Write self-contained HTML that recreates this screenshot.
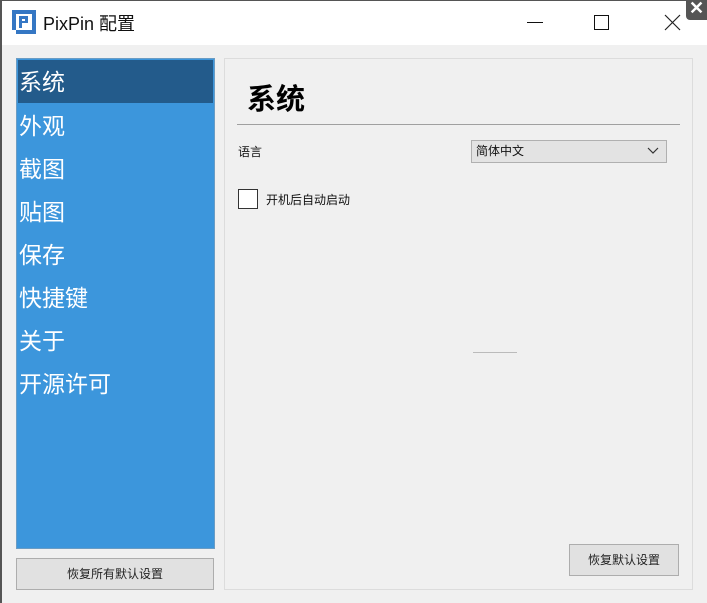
<!DOCTYPE html>
<html><head><meta charset="utf-8"><style>
*{margin:0;padding:0;box-sizing:border-box}
body{width:707px;height:603px;background:#f0f0f0;position:relative;overflow:hidden;font-family:"Liberation Sans","Noto Sans CJK SC",sans-serif}
.abs{position:absolute}
.title{left:0;top:0;width:707px;height:45px;background:#fff}
.nav{left:16px;top:58px;width:199px;height:491px;background:#3c96dc;border:1px solid #6a9cc4}
.item{position:absolute;left:2px;width:190px;height:43px;color:#fff;font-size:23px;line-height:43px}
.sel{left:1px;width:195px;background:#235b8b;padding-left:1px;top:1px}
.btn{background:#e1e1e1;border:1px solid #adadad;font-size:12px;color:#222;text-align:center}
</style></head><body>
<div class="abs title"></div>
<div class="abs" style="left:0;top:0;width:2px;height:603px;background:#555"></div>
<div class="abs" style="left:0;top:0;width:707px;height:1px;background:#555"></div>
<svg class="abs" style="left:12px;top:10px" width="24" height="24" viewBox="0 0 24 24"><rect x="0" y="0" width="24" height="24" fill="#3577c4"/><rect x="4" y="4" width="16" height="16" fill="#fff"/><rect x="7" y="6" width="3" height="12" fill="#3577c4"/><rect x="7" y="6" width="9" height="3" fill="#3577c4"/><rect x="13" y="6" width="3" height="7" fill="#3577c4"/><rect x="7" y="11" width="9" height="2" fill="#3577c4"/><rect x="0" y="20" width="4" height="4" fill="#fff"/></svg>
<div class="abs" style="left:43px;top:10px;font-size:18px;color:#111">PixPin 配置</div>
<div class="abs" style="left:527px;top:22px;width:16px;height:1px;background:#111"></div>
<div class="abs" style="left:594px;top:15px;width:15px;height:15px;border:1px solid #111"></div>
<svg class="abs" style="left:664px;top:14px" width="17" height="17"><path d="M1 1L16 16M16 1L1 16" stroke="#222" stroke-width="1.2"/></svg>
<div class="abs" style="left:686px;top:0;width:21px;height:20px;background:#555;border-radius:0 0 0 4px;color:#fff;font-weight:bold;font-size:18px;line-height:16px;text-align:center">✕</div>
<div class="abs nav">
<div class="item sel" style="top:1px;line-height:45px">系统</div>
<div class="item" style="top:46px">外观</div>
<div class="item" style="top:89px">截图</div>
<div class="item" style="top:132px">贴图</div>
<div class="item" style="top:175px">保存</div>
<div class="item" style="top:218px">快捷键</div>
<div class="item" style="top:261px">关于</div>
<div class="item" style="top:304px">开源许可</div>
</div>
<div class="abs btn" style="left:16px;top:558px;width:198px;height:32px;line-height:30px">恢复所有默认设置</div>
<div class="abs" style="left:224px;top:58px;width:469px;height:532px;border:1px solid #dcdcdc;background:#f0f0f0"></div>
<div class="abs" style="left:247px;top:76px;font-size:29px;font-weight:bold;color:#000">系统</div>
<div class="abs" style="left:237px;top:124px;width:443px;height:1px;background:#a0a0a0"></div>
<div class="abs" style="left:238px;top:143px;font-size:12px;color:#111">语言</div>
<div class="abs" style="left:471px;top:140px;width:196px;height:23px;background:#e3e3e3;border:1px solid #b0b0b0;font-size:12px;line-height:21px;padding-left:4px;color:#111">简体中文</div>
<svg class="abs" style="left:647px;top:147px" width="12" height="8"><path d="M1 1L6 6L11 1" stroke="#333" fill="none" stroke-width="1.2"/></svg>
<div class="abs" style="left:238px;top:189px;width:20px;height:20px;border:1px solid #333;background:#fff"></div>
<div class="abs" style="left:266px;top:191px;font-size:12px;color:#111">开机后自动启动</div>
<div class="abs" style="left:473px;top:352px;width:44px;height:1px;background:#bbb"></div>
<div class="abs btn" style="left:569px;top:544px;width:110px;height:32px;line-height:30px">恢复默认设置</div>
</body></html>
